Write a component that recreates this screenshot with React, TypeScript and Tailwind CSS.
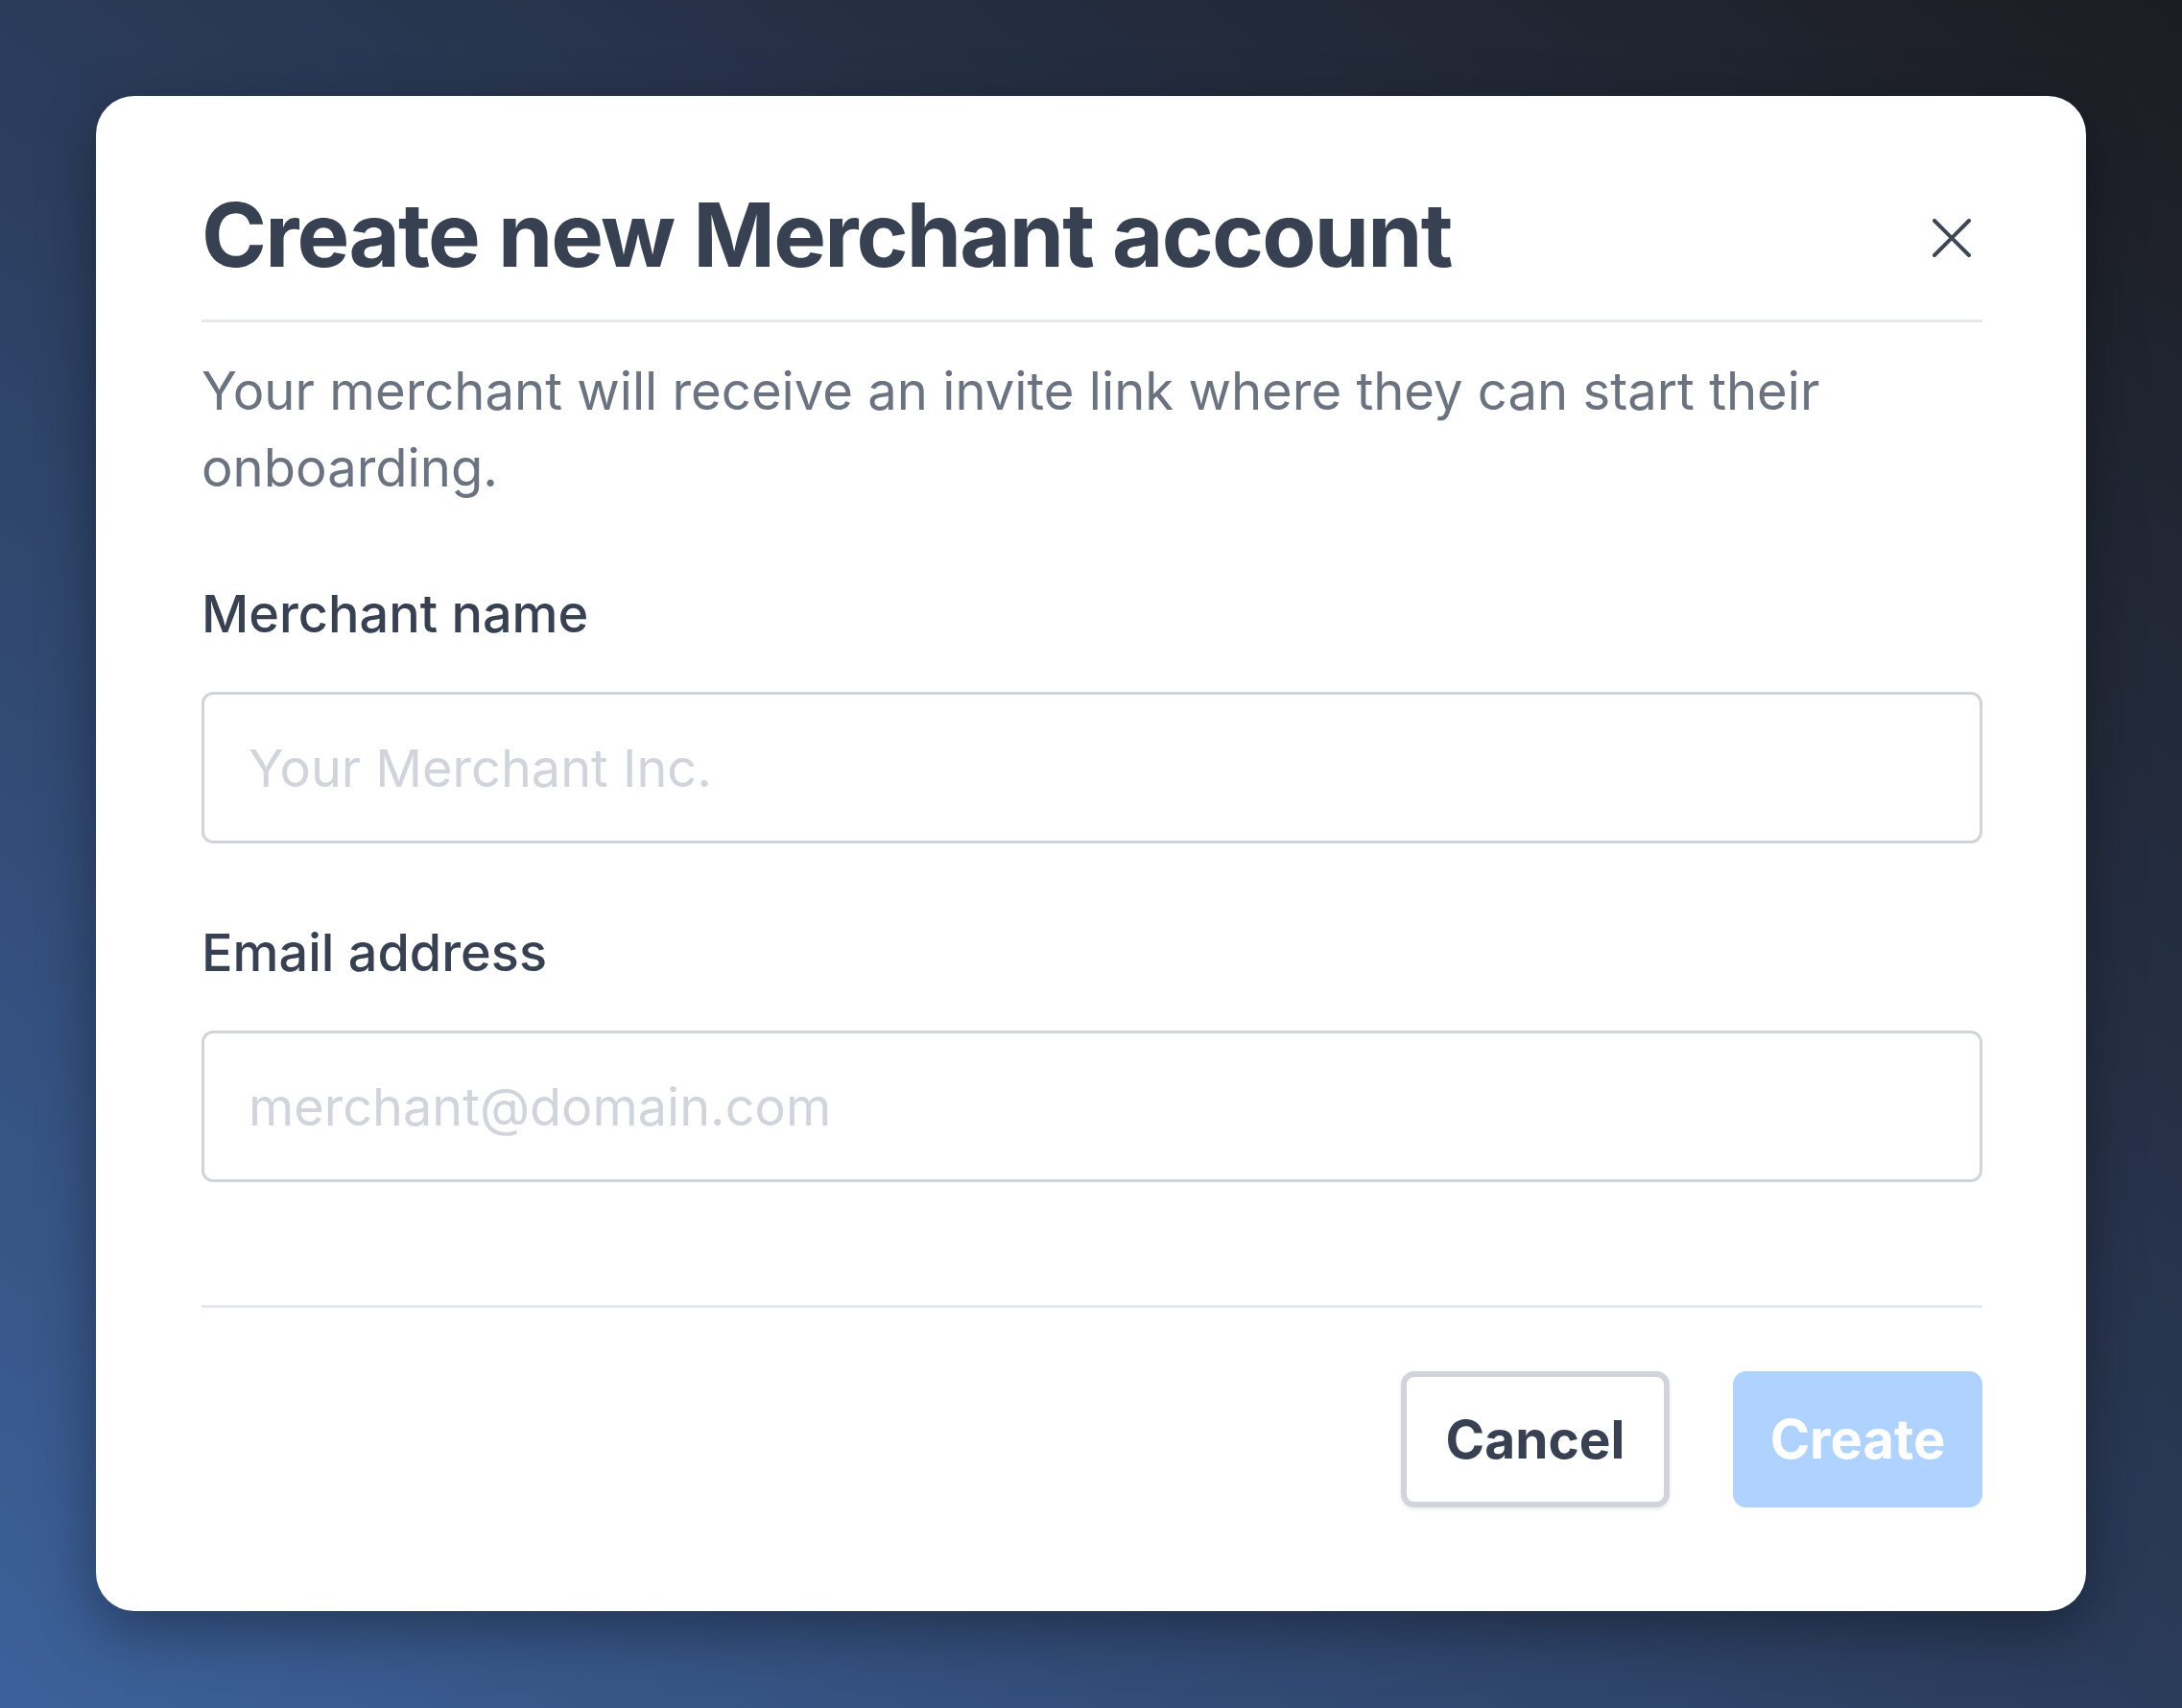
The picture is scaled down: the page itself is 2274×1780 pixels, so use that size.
import React from "react";

export default function App() {
  return (
    <div
      className="w-[2274px] h-[1780px] bg-linear-to-tr from-[#3c619a] via-[#2a3b5a] to-[#1c1d22] pt-[100px] pl-[100px]"
      style={{ fontFamily: "Inter, 'Noto Sans', sans-serif" }}
    >
      <div className="w-[2074px] h-[1579px] bg-white rounded-[40px] shadow-[0_20px_60px_rgba(0,0,0,0.35)] pl-[110px] pr-[108px] pt-[80px] flex flex-col">
        <div className="flex items-center justify-between h-[130px]">
          <h1 className="text-[92px] leading-none font-bold text-[#374151] tracking-[-0.02em]">
            Create new Merchant account
          </h1>
          <button className="w-[60px] h-[60px] flex items-center justify-center mr-[2px] mt-[6px]">
            <svg width="40" height="40" viewBox="0 0 40 40" fill="none">
              <path d="M2 2L38 38M38 2L2 38" stroke="#3f4756" strokeWidth="4" strokeLinecap="round" />
            </svg>
          </button>
        </div>
        <div className="h-[3px] bg-[#e5e7eb] mt-[23px]" />
        <p className="mt-[31px] text-[54.4px] leading-[80px] text-[#6b7280]">
          Your merchant will receive an invite link where they can start their onboarding.
        </p>
        <label className="mt-[73px] text-[54px] leading-[80px] font-medium text-[#374151]">Merchant name</label>
        <input
          className="mt-[41px] h-[158px] border-[3px] border-[#d1d5db] rounded-[12px] px-[46px] text-[54px] text-[#374151] placeholder:text-[#d1d5db] outline-none"
          placeholder="Your Merchant Inc."
        />
        <label className="mt-[74px] text-[54px] leading-[80px] font-medium text-[#374151]">Email address</label>
        <input
          className="mt-[41px] h-[158px] border-[3px] border-[#d1d5db] rounded-[12px] px-[46px] text-[54px] text-[#374151] placeholder:text-[#d1d5db] outline-none"
          placeholder="merchant@domain.com"
        />
        <div className="h-[3px] bg-[#e5e7eb] mt-[128px]" />
        <div className="mt-[66px] flex justify-end gap-[66px]">
          <button className="w-[280px] h-[142px] border-[6px] border-[#d1d5db] rounded-[14px] bg-white text-[55px] font-bold text-[#374151] shadow-[0_2px_4px_rgba(0,0,0,0.08)]">
            Cancel
          </button>
          <button className="w-[260px] h-[142px] rounded-[14px] bg-[#afd3fe] text-[56px] font-bold text-white">
            Create
          </button>
        </div>
      </div>
    </div>
  );
}
